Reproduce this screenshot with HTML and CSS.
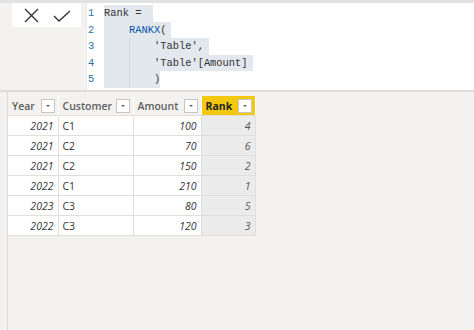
FILE: index.html
```
<!DOCTYPE html>
<html lang="en">
<head>
    <meta charset="UTF-8">
    <title>Rank measure</title>
    <link rel="stylesheet" href="styles.css">
</head>
<body>
    <div class="formula-bar">
        <div class="actions">
            <div class="action-box">
                <svg class="icon-x" width="15" height="15" viewBox="0 0 15 15">
                    <path d="M1 1 L14 14 M14 1 L1 14" stroke="#333" stroke-width="1.4" fill="none"/>
                </svg>
                <svg class="icon-check" width="18" height="12" viewBox="0 0 18 12">
                    <path d="M1 6 L6 11 L17 1" stroke="#333" stroke-width="1.4" fill="none"/>
                </svg>
            </div>
        </div>
        <div class="editor">
            <div class="line"><span class="num">1</span><span class="sel">Rank = </span></div>
            <div class="line"><span class="num">2</span><span class="sel"><span class="ind"></span><span class="fn">RANKX</span>(</span></div>
            <div class="line"><span class="num">3</span><span class="sel"><span class="ind"></span><span class="ind guide"></span>'Table',</span></div>
            <div class="line"><span class="num">4</span><span class="sel"><span class="ind"></span><span class="ind guide"></span>'Table'[Amount]</span></div>
            <div class="line"><span class="num">5</span><span class="sel last"><span class="ind"></span><span class="ind guide"></span>)</span></div>
        </div>
    </div>

    <div class="grid-area">
        <table class="data">
            <colgroup>
                <col style="width:50px">
                <col style="width:75px">
                <col style="width:68px">
                <col style="width:54px">
            </colgroup>
            <thead>
                <tr>
                    <th><div class="head">Year<span class="drop"></span></div></th>
                    <th><div class="head">Customer<span class="drop"></span></div></th>
                    <th><div class="head">Amount<span class="drop"></span></div></th>
                    <th class="active"><div class="head">Rank<span class="drop"></span></div></th>
                </tr>
            </thead>
            <tbody>
                <tr><td class="n">2021</td><td>C1</td><td class="n">100</td><td class="n rank">4</td></tr>
                <tr><td class="n">2021</td><td>C2</td><td class="n">70</td><td class="n rank">6</td></tr>
                <tr><td class="n">2021</td><td>C2</td><td class="n">150</td><td class="n rank">2</td></tr>
                <tr><td class="n">2022</td><td>C1</td><td class="n">210</td><td class="n rank">1</td></tr>
                <tr><td class="n">2023</td><td>C3</td><td class="n">80</td><td class="n rank">5</td></tr>
                <tr><td class="n">2022</td><td>C3</td><td class="n">120</td><td class="n rank">3</td></tr>
            </tbody>
        </table>
    </div>
</body>
</html>
```

FILE: styles.css
```
body {
    margin: 0;
    background-color: #f3f2f1;
    font-family: 'Open Sans', 'Noto Sans', sans-serif;
    font-size: 10.5px;
    color: #333;
}
.formula-bar {
    display: flex;
    height: 87px;
    border-top: 3px solid #e2e2e2;
    border-bottom: 2px solid #dcdcdc;
}
.actions {
    width: 86px;
    padding-left: 12px;
    box-sizing: border-box;
}
.action-box {
    width: 69px;
    height: 24px;
    background-color: white;
    display: flex;
    align-items: center;
    gap: 14px;
    padding-left: 12px;
    box-sizing: border-box;
}
.icon-check {
    margin-top: 1px;
}
.editor {
    flex: 1;
    background-color: white;
    border-left: 1px solid #e8e8e8;
    padding-top: 2px;
    font-family: 'Liberation Mono', monospace;
    font-size: 10.4px;
    color: #333;
}
.line {
    display: flex;
    height: 16.6px;
    line-height: 16.6px;
    white-space: pre;
}
.num {
    width: 16px;
    padding-left: 1px;
    color: #2b72a8;
}
.sel {
    background-color: #e3e8ee;
    padding-right: 5px;
}
.sel.last {
    padding-right: 0;
}
.ind {
    display: inline-block;
    width: 25px;
    height: 16.6px;
    vertical-align: top;
}
.guide {
    box-shadow: inset 1px 0 0 #cfd6de;
}
.fn {
    color: #0451a5;
}
.grid-area {
    margin-left: 7px;
    border-left: 1px solid #dadada;
    height: 238px;
    padding-top: 4px;
}
.data {
    border-collapse: collapse;
    table-layout: fixed;
    width: 247px;
}
.data th {
    height: 19px;
    padding: 0;
    background-color: #f3f2f1;
    border-right: 1px solid white;
    border-bottom: 1px solid #e1dfdd;
    text-align: left;
    font-weight: 600;
    color: #605e5c;
}
.data th.active {
    background-color: #f2c811;
    color: #252423;
    font-weight: 700;
}
.head {
    display: flex;
    align-items: center;
    justify-content: space-between;
    padding: 0 3px 0 4px;
}
.drop {
    position: relative;
    width: 12px;
    height: 12px;
    background-color: white;
    border: 1px solid #c8c6c4;
}
.drop::after {
    content: "";
    position: absolute;
    left: 4px;
    top: 5px;
    border-left: 2px solid transparent;
    border-right: 2px solid transparent;
    border-top: 2px solid #605e5c;
}
.data td {
    height: 19px;
    padding: 0 4px;
    background-color: white;
    border-right: 1px solid #e1dfdd;
    border-bottom: 1px solid #e1dfdd;
    white-space: nowrap;
}
.data td.n {
    text-align: right;
    font-style: italic;
}
.data td.rank {
    background-color: #ebebeb;
    color: #555;
}
```
